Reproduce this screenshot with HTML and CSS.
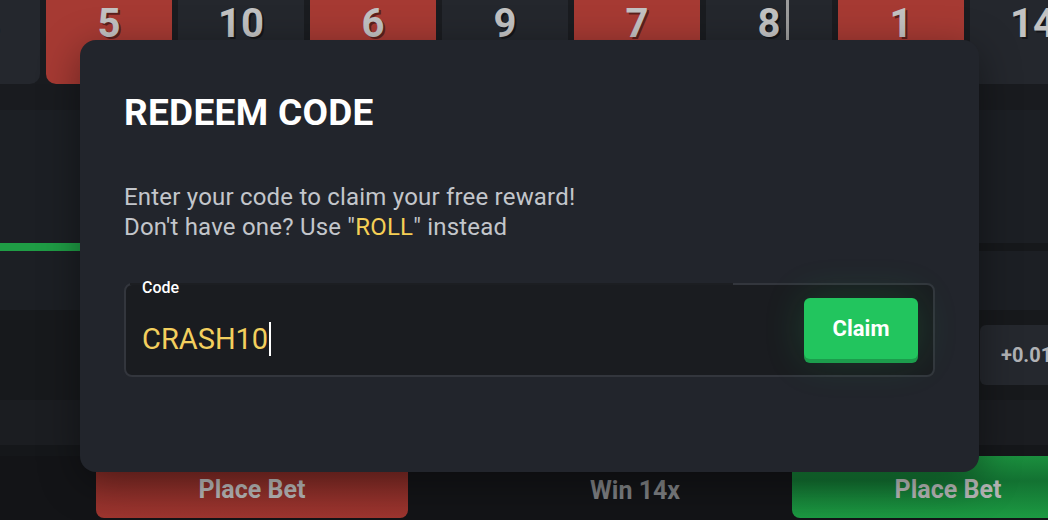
FILE: index.html
```html
<!DOCTYPE html>
<html lang="en">
<head>
    <meta charset="UTF-8">
    <meta name="viewport" content="width=device-width, initial-scale=1.0">
    <title>Redeem Code</title>
    <link rel="stylesheet" href="styles.css">
</head>
<body>
    <div class="game">
        <div class="strip">
            <div class="tile tile-dark"><span>13</span></div>
            <div class="tile tile-red"><span>5</span></div>
            <div class="tile tile-dark"><span>10</span></div>
            <div class="tile tile-red"><span>6</span></div>
            <div class="tile tile-dark"><span>9</span></div>
            <div class="tile tile-red"><span>7</span></div>
            <div class="tile tile-dark"><span>8</span></div>
            <div class="tile tile-red"><span>1</span></div>
            <div class="tile tile-dark"><span>14</span></div>
            <div class="marker"></div>
        </div>

        <div class="board">
            <div class="board-head"></div>

            <div class="round-panel">
                <div class="progress">
                    <div class="progress-fill"></div>
                </div>
            </div>

            <div class="bet-controls">
                <div class="amount"></div>
                <div class="quick">+0.01</div>
            </div>

            <div class="history-row"></div>

            <div class="bets-row">
                <div class="bet-btn bet-red">Place Bet</div>
                <div class="bet-win">Win 14x</div>
                <div class="bet-btn bet-green">Place Bet</div>
            </div>
        </div>
    </div>

    <div class="modal">
        <h2 class="modal-title">REDEEM CODE</h2>
        <p class="modal-text">
            Enter your code to claim your free reward!<br>
            Don't have one? Use "<span class="highlight">ROLL</span>" instead
        </p>

        <div class="code-field">
            <span class="code-label">Code</span>
            <div class="code-value">CRASH10<span class="caret"></span></div>
            <button type="button" class="claim">Claim</button>
        </div>
    </div>
</body>
</html>
```

FILE: styles.css
```css
* {
    margin: 0;
    padding: 0;
    box-sizing: border-box;
}

body {
    font-family: Roboto, 'Liberation Sans', sans-serif;
    background-color: #15171a;
    width: 1048px;
    height: 520px;
    overflow: hidden;
    position: relative;
}

/* roll history strip */
.strip {
    display: flex;
    gap: 6px;
    margin-left: -86px;
    margin-top: -4px;
    height: 88px;
    position: relative;
    background-color: #1a1c20;
}

.tile {
    flex: none;
    width: 126px;
    height: 88px;
    border-radius: 0 0 10px 10px;
    text-align: center;
    padding-top: 8px;
}

.tile span {
    font-size: 40px;
    line-height: 40px;
    font-weight: 700;
    color: #c2c2c2;
    text-shadow: 2px 2px 0 rgba(0, 0, 0, 0.45);
}

.tile-dark {
    background-color: #24272d;
}

.tile-red {
    background-color: #a63a33;
}

.marker {
    position: absolute;
    left: 872px;
    top: 0;
    width: 3px;
    height: 44px;
    background-color: #9c9c9c;
}

/* game board behind the modal */
.board {
    display: flex;
    flex-direction: column;
}

.board-head {
    height: 26px;
    background-color: #191b1f;
}

.round-panel {
    height: 200px;
    background-color: #1c1f24;
    padding-top: 133px;
}

.progress {
    height: 8px;
    background-color: #16181b;
}

.progress-fill {
    width: 45%;
    height: 100%;
    background-color: #1f9d45;
}

.bet-controls {
    display: flex;
    gap: 6px;
    height: 90px;
    padding: 15px 0 15px 96px;
    background-color: #17191c;
}

.amount {
    flex: 1;
    background-color: #1d1f24;
    border-radius: 6px;
}

.quick {
    flex: none;
    width: 68px;
    padding-left: 21px;
    background-color: #25282e;
    border-radius: 6px 0 0 6px;
    display: flex;
    align-items: center;
    font-size: 20px;
    font-weight: 700;
    color: #b0b2b5;
    white-space: nowrap;
    overflow: hidden;
}

.history-row {
    height: 45px;
    background-color: #1b1d21;
    margin-bottom: 11px;
}

.bets-row {
    display: flex;
    height: 64px;
    padding-left: 96px;
    background-color: #131417;
}

.bet-btn {
    flex: none;
    width: 312px;
    height: 62px;
    border-radius: 8px;
    display: flex;
    align-items: center;
    justify-content: center;
    padding-top: 4px;
    font-size: 25px;
    font-weight: 700;
    color: #b6b6b6;
}

.bet-red {
    background: linear-gradient(#7a2823, #9e352f);
}

.bet-green {
    background: linear-gradient(#1b8f3e, #137232 40%, #1c9a42);
}

.bet-win {
    flex: none;
    width: 384px;
    padding-left: 70px;
    display: flex;
    align-items: center;
    justify-content: center;
    padding-top: 4px;
    font-size: 25px;
    font-weight: 700;
    color: #7d7f82;
}

/* redeem modal */
.modal {
    position: absolute;
    left: 80px;
    top: 40px;
    width: 899px;
    height: 432px;
    background-color: #22252c;
    border-radius: 16px;
    padding: 51px 44px 0 44px;
    box-shadow: 0 10px 40px rgba(0, 0, 0, 0.4);
}

.modal-title {
    font-size: 37px;
    line-height: 43px;
    font-weight: 700;
    letter-spacing: 0.3px;
    color: #ffffff;
}

.modal-text {
    margin-top: 48px;
    font-size: 24px;
    line-height: 30px;
    letter-spacing: 0.2px;
    color: #c3c6cb;
}

.highlight {
    color: #f5cf55;
}

.code-field {
    position: relative;
    margin-top: 41px;
    height: 94px;
    border: 2px solid #33363d;
    border-radius: 8px;
    background-color: #1a1c20;
    display: flex;
    align-items: center;
    padding: 0 15px 0 16px;
}

.code-field::before {
    content: "";
    position: absolute;
    top: -2px;
    left: 4px;
    width: 603px;
    height: 2px;
    background-color: #1c1e22;
}

.code-label {
    position: absolute;
    top: -5px;
    left: 16px;
    font-size: 16px;
    line-height: 16px;
    font-weight: 500;
    color: #ffffff;
}

.code-value {
    flex: 1;
    margin-top: 17px;
    font-size: 29px;
    line-height: 34px;
    color: #f3cf5e;
    display: flex;
    align-items: center;
}

.caret {
    display: inline-block;
    width: 2px;
    height: 34px;
    margin-left: 1px;
    background-color: #ffffff;
}

.claim {
    width: 114px;
    height: 61px;
    margin-bottom: 4px;
    border: none;
    border-radius: 6px;
    background-color: #22c55e;
    box-shadow: 0 4px 0 #1c9d4c, 0 0 40px rgba(34, 197, 94, 0.18);
    font-family: Roboto, 'Liberation Sans', sans-serif;
    font-size: 22px;
    font-weight: 700;
    color: #ffffff;
    cursor: pointer;
}
```
